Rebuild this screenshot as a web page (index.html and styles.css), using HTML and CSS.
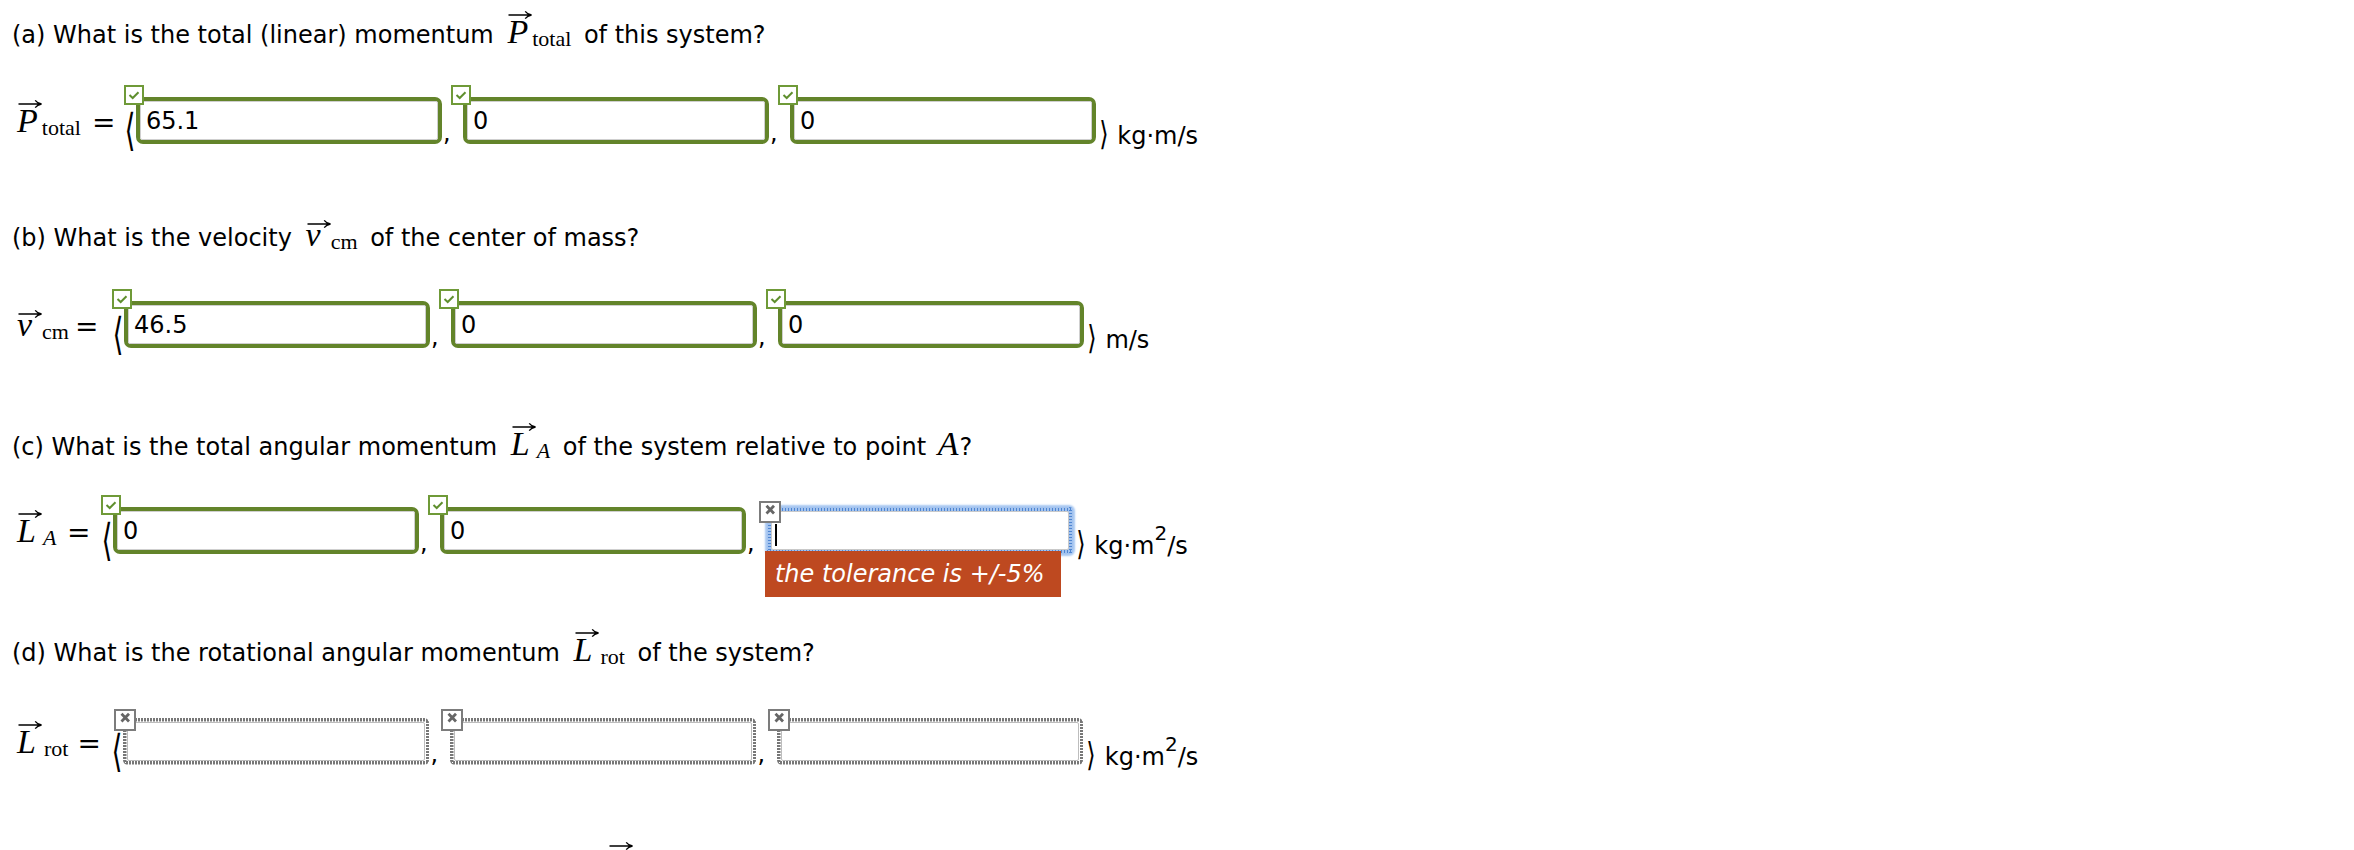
FILE: index.html
```html
<!DOCTYPE html>
<html lang="en">
<head>
<meta charset="utf-8">
<title>Momentum of the system</title>
<link rel="stylesheet" href="styles.css">
</head>
<body>
<main class="page">

  <section class="part pa">
    <p class="q">(a) What is the total (linear) momentum <span class="m qm"><span class="vec"><svg class="arr" viewBox="0 0 24 10"><path d="M0.5 5H22M17.2 1.3C18.7 3.3 20.8 4.4 23.5 5C20.8 5.6 18.7 6.7 17.2 8.7"/></svg>P</span><span class="sub">total</span></span> of this system?</p>
    <div class="ans">
      <span class="lbl"><span class="vec"><svg class="arr" viewBox="0 0 24 10"><path d="M0.5 5H22M17.2 1.3C18.7 3.3 20.8 4.4 23.5 5C20.8 5.6 18.7 6.7 17.2 8.7"/></svg>P</span><span class="sub">total</span><span class="eq eqa">=</span></span>
      <span class="lang"><span class="g">⟨</span></span>
      <span class="fld ok"><svg class="ico" viewBox="0 0 20 20"><rect x="1" y="1" width="18" height="18"/><path d="M5.5 10L8.7 13L14.5 7.3"/></svg><input class="inp" type="text" value="65.1"></span>
      <span class="comma">,</span>
      <span class="fld ok"><svg class="ico" viewBox="0 0 20 20"><rect x="1" y="1" width="18" height="18"/><path d="M5.5 10L8.7 13L14.5 7.3"/></svg><input class="inp" type="text" value="0"></span>
      <span class="comma">,</span>
      <span class="fld ok"><svg class="ico" viewBox="0 0 20 20"><rect x="1" y="1" width="18" height="18"/><path d="M5.5 10L8.7 13L14.5 7.3"/></svg><input class="inp" type="text" value="0"></span>
      <span class="unit"><span class="rang">⟩</span> kg·m/s</span>
    </div>
  </section>

  <section class="part pb">
    <p class="q">(b) What is the velocity <span class="m qm"><span class="vec low"><svg class="arr" viewBox="0 0 24 10"><path d="M0.5 5H22M17.2 1.3C18.7 3.3 20.8 4.4 23.5 5C20.8 5.6 18.7 6.7 17.2 8.7"/></svg>v</span><span class="sub sb">cm</span></span> of the center of mass?</p>
    <div class="ans">
      <span class="lbl"><span class="vec low"><svg class="arr" viewBox="0 0 24 10"><path d="M0.5 5H22M17.2 1.3C18.7 3.3 20.8 4.4 23.5 5C20.8 5.6 18.7 6.7 17.2 8.7"/></svg>v</span><span class="sub sb">cm</span><span class="eq eqb">=</span></span>
      <span class="lang"><span class="g">⟨</span></span>
      <span class="fld ok"><svg class="ico" viewBox="0 0 20 20"><rect x="1" y="1" width="18" height="18"/><path d="M5.5 10L8.7 13L14.5 7.3"/></svg><input class="inp" type="text" value="46.5"></span>
      <span class="comma">,</span>
      <span class="fld ok"><svg class="ico" viewBox="0 0 20 20"><rect x="1" y="1" width="18" height="18"/><path d="M5.5 10L8.7 13L14.5 7.3"/></svg><input class="inp" type="text" value="0"></span>
      <span class="comma">,</span>
      <span class="fld ok"><svg class="ico" viewBox="0 0 20 20"><rect x="1" y="1" width="18" height="18"/><path d="M5.5 10L8.7 13L14.5 7.3"/></svg><input class="inp" type="text" value="0"></span>
      <span class="unit"><span class="rang">⟩</span> m/s</span>
    </div>
  </section>

  <section class="part pc">
    <p class="q">(c) What is the total angular momentum <span class="m qm"><span class="vec"><svg class="arr" viewBox="0 0 24 10"><path d="M0.5 5H22M17.2 1.3C18.7 3.3 20.8 4.4 23.5 5C20.8 5.6 18.7 6.7 17.2 8.7"/></svg>L</span><span class="sub it sc">A</span></span> of the system relative to point <span class="m qe"><span class="mi">A</span></span>?</p>
    <div class="ans">
      <span class="lbl"><span class="vec"><svg class="arr" viewBox="0 0 24 10"><path d="M0.5 5H22M17.2 1.3C18.7 3.3 20.8 4.4 23.5 5C20.8 5.6 18.7 6.7 17.2 8.7"/></svg>L</span><span class="sub it sc">A</span><span class="eq eqc">=</span></span>
      <span class="lang"><span class="g">⟨</span></span>
      <span class="fld ok"><svg class="ico" viewBox="0 0 20 20"><rect x="1" y="1" width="18" height="18"/><path d="M5.5 10L8.7 13L14.5 7.3"/></svg><input class="inp" type="text" value="0"></span>
      <span class="comma">,</span>
      <span class="fld ok"><svg class="ico" viewBox="0 0 20 20"><rect x="1" y="1" width="18" height="18"/><path d="M5.5 10L8.7 13L14.5 7.3"/></svg><input class="inp" type="text" value="0"></span>
      <span class="comma">,</span>
      <span class="fld focus"><svg class="ico xi xf" viewBox="0 0 22 22"><rect x="1" y="1" width="20" height="20"/><path d="M7.5 4.8L15 12.5M15 4.8L7.5 12.5"/></svg><input class="inp" type="text" value=""><span class="caret"></span><span class="tip">the tolerance is +/-5%</span></span>
      <span class="unit"><span class="rang">⟩</span> kg·m<sup>2</sup>/s</span>
    </div>
  </section>

  <section class="part pd">
    <p class="q">(d) What is the rotational angular momentum <span class="m qm"><span class="vec"><svg class="arr" viewBox="0 0 24 10"><path d="M0.5 5H22M17.2 1.3C18.7 3.3 20.8 4.4 23.5 5C20.8 5.6 18.7 6.7 17.2 8.7"/></svg>L</span><span class="sub sd">rot</span></span> of the system?</p>
    <div class="ans">
      <span class="lbl"><span class="vec"><svg class="arr" viewBox="0 0 24 10"><path d="M0.5 5H22M17.2 1.3C18.7 3.3 20.8 4.4 23.5 5C20.8 5.6 18.7 6.7 17.2 8.7"/></svg>L</span><span class="sub sd">rot</span><span class="eq">=</span></span>
      <span class="lang"><span class="g">⟨</span></span>
      <span class="fld none"><svg class="ico xi" viewBox="0 0 22 22"><rect x="1" y="1" width="20" height="20"/><path d="M7.5 4.8L15 12.5M15 4.8L7.5 12.5"/></svg><input class="inp" type="text" value=""></span>
      <span class="comma">,</span>
      <span class="fld none"><svg class="ico xi" viewBox="0 0 22 22"><rect x="1" y="1" width="20" height="20"/><path d="M7.5 4.8L15 12.5M15 4.8L7.5 12.5"/></svg><input class="inp" type="text" value=""></span>
      <span class="comma">,</span>
      <span class="fld none"><svg class="ico xi" viewBox="0 0 22 22"><rect x="1" y="1" width="20" height="20"/><path d="M7.5 4.8L15 12.5M15 4.8L7.5 12.5"/></svg><input class="inp" type="text" value=""></span>
      <span class="unit"><span class="rang">⟩</span> kg·m<sup>2</sup>/s</span>
    </div>
  </section>

  <section class="part pe">
    <p class="q">(e) What is the translational angular momentum <span class="m qm"><span class="vec"><svg class="arr" viewBox="0 0 24 10"><path d="M0.5 5H22M17.2 1.3C18.7 3.3 20.8 4.4 23.5 5C20.8 5.6 18.7 6.7 17.2 8.7"/></svg>L</span><span class="sub">trans,A</span></span> of the system relative to point <span class="m qe"><span class="mi">A</span></span>?</p>
  </section>

</main>
</body>
</html>
```

FILE: styles.css
```css
* { box-sizing: border-box; }

html, body {
  margin: 0;
  padding: 0;
  background: #fff;
}

body {
  font-family: "DejaVu Sans", Verdana, sans-serif;
  font-size: 24px;
  color: #000;
}

.page {
  padding: 0 12px;
}

/* question lines */
.q {
  margin: 0;
  height: 30px;
  line-height: 30px;
  white-space: nowrap;
}

.pa .q { margin-top: 20px; }
.pb .q { margin-top: 75.5px; }
.pc .q { margin-top: 80.5px; }
.pd .q { margin-top: 80.5px; }
.pe .q { margin-top: 83px; }

/* math */
.m {
  font-family: "Liberation Serif", "Times New Roman", serif;
  line-height: 0;
}

.qm { margin: 0 5px 0 6px; }
.qe { margin: 0 1px 0 4px; }

.vec {
  position: relative;
  font-size: 34px;
  font-style: italic;
}

.mi {
  font-size: 34px;
  font-style: italic;
}

.arr {
  position: absolute;
  left: 1px;
  top: -3px;
  width: 24px;
  height: 10px;
  overflow: visible;
}

.arr path {
  fill: none;
  stroke: #000;
  stroke-width: 1.3;
}

.vec.low .arr { top: 3px; }

.sub {
  font-size: 22px;
  font-style: normal;
  vertical-align: -3px;
  margin-left: 4px;
  line-height: 0;
}

.sub.it { font-style: italic; }
.sub.sb { margin-left: 10px; }
.sub.sc { margin-left: 7px; }
.sub.sd { margin-left: 8px; }

/* answer rows */
.ans {
  display: flex;
  align-items: flex-start;
  height: 50px;
  margin-top: 47px;
}

.pb .ans { margin-top: 48.5px; }
.pc .ans { margin-top: 45.5px; }
.pd .ans { margin-top: 50px; }

.lbl {
  flex: none;
  margin-top: 7px;
  padding-left: 5px;
  font-family: "Liberation Serif", "Times New Roman", serif;
  font-size: 34px;
  line-height: 34px;
  white-space: nowrap;
}

.eq {
  margin: 0 9.6px 0 9px;
  font-family: "DejaVu Sans", sans-serif;
  font-size: 28px;
  font-style: normal;
  line-height: 0;
}

.eq.eqa { margin-left: 11px; margin-right: 7.6px; }
.eq.eqb { margin-left: 6px; margin-right: 12.6px; }
.eq.eqc { margin-left: 10.5px; }

.lang {
  flex: none;
  width: 13px;
  margin-top: 13px;
  font-family: "DejaVu Sans", sans-serif;
  font-size: 36px;
  line-height: 36px;
}

.lang .g {
  display: inline-block;
  transform: translate(0, 2px) scale(0.78, 1.22);
}

.comma {
  flex: none;
  width: 21px;
  margin-top: 22px;
  padding-left: 1px;
  line-height: 28px;
}

.unit {
  flex: none;
  margin-top: 23px;
  margin-left: 2px;
  line-height: 28px;
  white-space: nowrap;
}

.rang {
  display: inline-block;
  font-size: 30px;
  line-height: 28px;
  transform: scale(0.8, 1.1);
}

.unit sup {
  font-size: 20px;
  line-height: 0;
  vertical-align: 14px;
}

/* input fields */
.fld {
  position: relative;
  flex: none;
  width: 306px;
  height: 47px;
}

.inp {
  display: block;
  width: 100%;
  height: 100%;
  margin: 0;
  padding: 0 0 0 5px;
  border: 1px solid #cfcfcf;
  border-radius: 2px;
  background: #fff;
  color: #000;
  font-family: "DejaVu Sans", Verdana, sans-serif;
  font-size: 24px;
  outline: none;
}

.fld.ok {
  border: 4px solid #63842a;
  border-radius: 7px;
}

.fld.none {
  padding: 4px;
  border-radius: 5px;
  background-color: #fff;
  background-image:
    repeating-linear-gradient(90deg, #777 0 2px, transparent 2px 3px),
    repeating-linear-gradient(90deg, #777 0 2px, transparent 2px 3px),
    repeating-linear-gradient(180deg, #777 0 2px, transparent 2px 3px),
    repeating-linear-gradient(180deg, #777 0 2px, transparent 2px 3px);
  background-size: 100% 3.5px, 100% 3.5px, 3.5px 100%, 3.5px 100%;
  background-position: 0 0, 0 100%, 0 0, 100% 0;
  background-repeat: no-repeat;
}

.fld.none .inp { border: 1.5px solid #bdbdbd; }

.fld.focus {
  padding: 4px;
  border-radius: 4px;
  box-shadow: 0 0 2px 2px #a8c8f2;
  background-color: #a3c3ef;
  background-image:
    repeating-linear-gradient(90deg, #4f86d2 0 1.5px, transparent 1.5px 3px),
    repeating-linear-gradient(90deg, #4f86d2 0 1.5px, transparent 1.5px 3px),
    repeating-linear-gradient(180deg, #4f86d2 0 1.5px, transparent 1.5px 3px),
    repeating-linear-gradient(180deg, #4f86d2 0 1.5px, transparent 1.5px 3px);
  background-size: 100% 3px, 100% 3px, 3px 100%, 3px 100%;
  background-position: 0 1px, 0 calc(100% - 1px), 1px 0, calc(100% - 1px) 0;
  background-repeat: no-repeat;
}

.fld.focus .inp { border: 1.5px solid #c9c9c9; }

/* status icons */
.ico {
  position: absolute;
  left: -16px;
  top: -16px;
  width: 20px;
  height: 20px;
  z-index: 1;
}

.fld.none .ico, .fld.focus .ico { left: -9px; top: -9px; }

.ico rect {
  fill: #fff;
  stroke: #6f9a38;
  stroke-width: 2;
}

.ico path {
  fill: none;
  stroke: #5f8f2e;
  stroke-width: 2;
}

.ico.xi {
  width: 22px;
  height: 22px;
}

.ico.xi rect { stroke: #7c7c7c; }

.ico.xi path {
  stroke: #666;
  stroke-width: 2.8;
}

.fld.focus .ico.xf { left: -8px; top: -6px; }

.caret {
  position: absolute;
  left: 8px;
  top: 17px;
  width: 2px;
  height: 22px;
  background: #000;
}

.tip {
  position: absolute;
  left: -2px;
  top: 44px;
  width: 296px;
  height: 46px;
  padding-left: 10px;
  background: #be4920;
  color: #fff;
  font-style: italic;
  line-height: 46px;
  white-space: nowrap;
  z-index: 2;
}
```
